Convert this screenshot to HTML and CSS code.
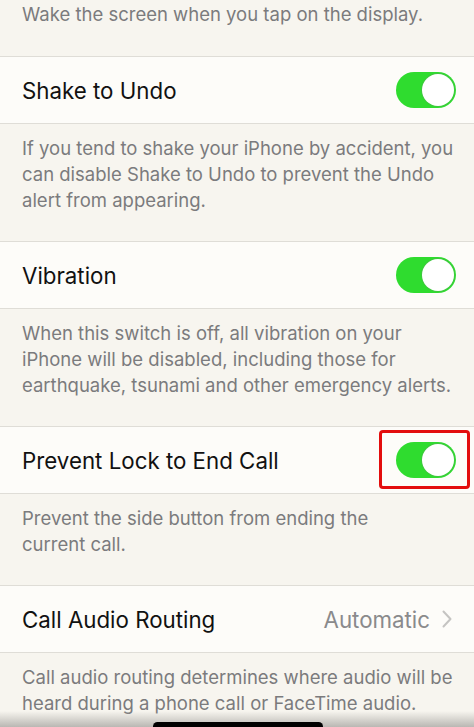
FILE: index.html
```html
<!DOCTYPE html>
<html>
  <head>
    <meta charset="utf-8">
    <title>Touch</title>
    <link rel="stylesheet" href="styles.css">
  </head>
  <body>
    <div class="screen">
      <p class="note note-top">Wake the screen when you tap on the display.</p>

      <div class="row">
        <span class="label">Shake to Undo</span>
        <span class="switch on"><span class="knob"></span></span>
      </div>
      <p class="note">If you tend to shake your iPhone by accident, you can disable Shake to Undo to prevent the Undo alert from appearing.</p>

      <div class="row">
        <span class="label">Vibration</span>
        <span class="switch on"><span class="knob"></span></span>
      </div>
      <p class="note">When this switch is off, all vibration on your iPhone will be disabled, including those for earthquake, tsunami and other emergency alerts.</p>

      <div class="row">
        <span class="label">Prevent Lock to End Call</span>
        <span class="switch on marked"><span class="knob"></span></span>
      </div>
      <p class="note">Prevent the side button from ending the<br>current call.</p>

      <div class="row">
        <span class="label">Call Audio Routing</span>
        <span class="value">Automatic</span>
        <svg class="chevron" width="10" height="18" viewBox="0 0 10 18">
          <path d="M1.5 1.5 L8.5 9 L1.5 16.5" fill="none" stroke="#c5c4c2" stroke-width="2" stroke-linecap="round" stroke-linejoin="round"/>
        </svg>
      </div>
      <p class="note">Call audio routing determines where audio will be heard during a phone call or FaceTime audio.</p>

      <div class="home-bar"></div>
    </div>
  </body>
</html>
```

FILE: styles.css
```css
* {
  margin: 0;
  padding: 0;
  box-sizing: border-box;
}
body {
  background-color: #f7f5ef;
  font-family: Inter, "Noto Sans", sans-serif;
  -webkit-font-smoothing: antialiased;
}
.screen {
  position: relative;
  width: 474px;
  height: 727px;
  overflow: hidden;
}
.note {
  color: #7b7b7d;
  font-size: 18.5px;
  line-height: 26px;
  padding: 11px 18px 28px 22px;
}
.note-top {
  padding-top: 1px;
  padding-bottom: 29px;
}
.row {
  display: flex;
  align-items: center;
  min-height: 68px;
  padding: 0 18px 0 22px;
  background-color: #fdfcf9;
  border-top: 1px solid #dfddd7;
  border-bottom: 1px solid #dfddd7;
}
.label {
  flex: 1;
  color: #111;
  font-size: 22.3px;
  padding-top: 1px;
}
.value {
  color: #8a8a8c;
  font-size: 22.3px;
  margin-right: 12px;
}
.chevron {
  margin-right: 4px;
}
.switch {
  position: relative;
  width: 60px;
  height: 36px;
  border-radius: 18px;
  background-color: #e6e5e1;
}
.switch.on {
  background-color: #2fdc2f;
}
.knob {
  position: absolute;
  top: 2px;
  left: 2px;
  width: 32px;
  height: 32px;
  border-radius: 50%;
  background-color: #fff;
  box-shadow: 0 0 0 1px #3ec83e;
}
.switch.on .knob {
  left: 26px;
}
/* red highlight frame around the switch */
.switch.marked::after {
  content: "";
  position: absolute;
  top: -12px;
  left: -17px;
  right: -14px;
  bottom: -11px;
  border: 3px solid #e30d0d;
  border-radius: 4px;
}
.home-bar {
  position: absolute;
  left: 0;
  right: 0;
  bottom: 0;
  height: 16px;
  background: linear-gradient(to bottom, rgba(190, 188, 184, 0), rgba(170, 168, 164, 0.8));
}
.home-bar::after {
  content: "";
  position: absolute;
  left: 153px;
  width: 170px;
  bottom: -4px;
  height: 9px;
  border-radius: 5px;
  background-color: #000;
}
```
